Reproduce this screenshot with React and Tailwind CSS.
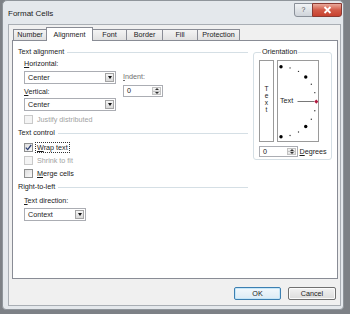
import React from 'react';

const font = { fontFamily: '"Liberation Sans", Arial, sans-serif' };

const Header = ({ children }) => (
  <div className="h-[12px] flex items-center">
    <span className="leading-none">{children}</span>
    <div className="flex-1 h-px bg-[#d5dfe5] ml-[3px]" />
  </div>
);

const Arrow = ({ up }) =>
  up ? (
    <span className="w-0 h-0 border-l-[2px] border-r-[2px] border-b-[2px] border-l-transparent border-r-transparent border-b-[#333]" />
  ) : (
    <span className="w-0 h-0 border-l-[2px] border-r-[2px] border-t-[2px] border-l-transparent border-r-transparent border-t-[#333]" />
  );

const Select = ({ value, width }) => (
  <div className={`${width} h-[13px] border border-[#abadb3] bg-white flex items-center`}>
    <span className="pl-[3px] flex-1 leading-none">{value}</span>
    <span className="w-[9px] h-[9px] mr-px border border-[#a4a4a4] bg-linear-to-b from-[#f6f6f6] to-[#d8d8d8] flex items-center justify-center">
      <span className="w-0 h-0 border-l-[2.5px] border-r-[2.5px] border-t-[3px] border-l-transparent border-r-transparent border-t-[#111]" />
    </span>
  </div>
);

const Spin = ({ width, height }) => (
  <div className={`${width} ${height} border border-[#abadb3] bg-white flex`}>
    <span className="flex-1 pl-[3px] flex items-center leading-none">0</span>
    <div className="w-[9px] my-px mr-px flex flex-col border border-[#c2c2c2]">
      <div className="flex-1 flex items-center justify-center bg-linear-to-b from-[#f7f7f7] to-[#e4e4e4] border-b border-[#c2c2c2]">
        <Arrow up />
      </div>
      <div className="flex-1 flex items-center justify-center bg-linear-to-b from-[#f2f2f2] to-[#dedede]">
        <Arrow />
      </div>
    </div>
  </div>
);

const Check = ({ checked, disabled, focus, children }) => (
  <div className="h-[12px] flex items-center">
    <span
      className={`w-[9px] h-[9px] border flex items-center justify-center ${
        disabled
          ? 'border-[#c9c9c9] bg-[#f4f4f4]'
          : 'border-[#8e8f8f] bg-linear-to-br from-[#dcdcdc] to-[#fbfbfb]'
      }`}
    >
      {checked && (
        <svg width="7" height="7" viewBox="0 0 7 7">
          <path d="M0.8 3.6 L2.7 5.6 L6.2 1" fill="none" stroke="#2c3f73" strokeWidth="1.3" />
        </svg>
      )}
    </span>
    <span
      className={`ml-[2px] px-px leading-[9px] ${disabled ? 'text-[#a2a2a2]' : ''} ${
        focus ? 'border border-dotted border-[#333]' : 'border border-transparent'
      }`}
    >
      {children}
    </span>
  </div>
);

const U = ({ children }) => <span className="underline underline-offset-1">{children}</span>;

const tabs = [
  ['Number', 'w-[34px]'],
  ['Alignment', 'w-[47px]'],
  ['Font', 'w-[35px]'],
  ['Border', 'w-[37px]'],
  ['Fill', 'w-[36px]'],
  ['Protection', 'w-[43px]'],
];

const Dial = () => {
  const cx = 3;
  const cy = 40.7;
  const r = 35;
  const dots = [];
  for (let a = 90; a >= -90; a -= 15) {
    if (a === 0) continue;
    const t = (a * Math.PI) / 180;
    const x = cx + r * Math.cos(t);
    const y = cy - r * Math.sin(t);
    const big = a % 45 === 0;
    dots.push(<circle key={a} cx={x} cy={y} r={big ? 1.7 : 0.7} fill={big ? '#000' : '#333'} />);
  }
  return (
    <svg className="absolute inset-0" width="40" height="80" viewBox="0 0 40 80">
      {dots}
      <line x1="19.5" y1="40.5" x2="36" y2="40.5" stroke="#555" strokeWidth="0.8" />
      <polygon points="38.3,38.4 40.4,40.6 38.3,42.8 36.2,40.6" fill="#b0193e" />
    </svg>
  );
};

export default function App() {
  return (
    <div
      className="w-[350px] h-[314px] bg-[#7d8186] pl-[2px] pr-[6px] pb-[4px] flex text-[7.2px] text-[#1b1b1b]"
      style={font}
    >
      <div className="flex-1 flex flex-col bg-[#e4e8ec] border border-[#8f959b] rounded-b-[4px] rounded-t-[5px]">
        {/* title bar */}
        <div className="h-[23px] flex items-start">
          <span className="pl-[5px] pt-[9px] text-[8px] leading-none">Format Cells</span>
          <div className="ml-auto mt-[2px] mr-px flex">
            <div className="w-[19px] h-[14px] border border-[#8a9099] rounded-bl-[3px] bg-linear-to-b from-[#f1f3f5] to-[#cfd4da] flex items-center justify-center text-[7px] text-[#555]">
              ?
            </div>
            <div className="w-[30px] h-[14px] -ml-px border border-[#8a3a33] rounded-br-[3px] bg-linear-to-b from-[#e9a99b] via-[#d25a48] to-[#c7412f] flex items-center justify-center">
              <svg width="9" height="8" viewBox="0 0 9 8">
                <path d="M1.5 1 L7.5 7 M7.5 1 L1.5 7" stroke="#fff" strokeWidth="1.8" />
              </svg>
            </div>
          </div>
        </div>

        {/* client */}
        <div className="ml-[5px] mr-[2px] mb-[3px] flex-1 flex flex-col border border-[#a9aeb4] bg-[#f0f0f0]">
          <div className="h-[15px] pl-[4px] flex items-end">
            {tabs.map(([name, w], i) =>
              name === 'Alignment' ? (
                <div
                  key={name}
                  className={`${w} h-[14px] -mb-px -ml-px relative z-10 bg-white border border-b-0 border-[#898c95] flex items-center justify-center leading-none`}
                >
                  {name}
                </div>
              ) : (
                <div
                  key={name}
                  className={`${w} h-[11px] ${i === 0 ? '' : '-ml-px'} bg-linear-to-b from-[#f4f4f4] to-[#e1e1e1] border border-b-0 border-[#898c95] flex items-center justify-center leading-none`}
                >
                  {name}
                </div>
              )
            )}
          </div>

          {/* tab panel */}
          <div className="ml-[3px] mr-[2px] h-[239px] bg-white border border-[#898c95] pl-[5px] pt-[5px] flex">
            {/* left column */}
            <div className="w-[230px] flex flex-col">
              <Header>Text alignment</Header>
              <div className="pl-[6px] flex flex-col">
                <div className="flex">
                  <div className="w-[92px] flex flex-col">
                    <div className="h-[12px] flex items-center leading-none">
                      <span>
                        <U>H</U>orizontal:
                      </span>
                    </div>
                    <div className="mt-px">
                      <Select value="Center" width="w-[92px]" />
                    </div>
                    <div className="mt-[2px] h-[12px] flex items-center leading-none">
                      <span>
                        <U>V</U>ertical:
                      </span>
                    </div>
                    <Select value="Center" width="w-[92px]" />
                  </div>
                  <div className="ml-[7px] flex flex-col">
                    <div className="mt-[13px] h-[12px] flex items-center leading-none text-[#6f6f6f]">
                      <span>
                        <U>I</U>ndent:
                      </span>
                    </div>
                    <div className="mt-[2px]">
                      <Spin width="w-[40px]" height="h-[12px]" />
                    </div>
                  </div>
                </div>
                <div className="mt-[2px]">
                  <Check disabled>Justify distributed</Check>
                </div>
              </div>

              <div className="mt-[2px]">
                <Header>Text control</Header>
              </div>
              <div className="pl-[6px] flex flex-col">
                <div className="mt-[2px]">
                  <Check checked focus>
                    <U>W</U>rap text
                  </Check>
                </div>
                <div className="mt-px">
                  <Check disabled>Shrink to fit</Check>
                </div>
                <div className="mt-px">
                  <Check>
                    <U>M</U>erge cells
                  </Check>
                </div>
              </div>

              <div className="mt-[2px]">
                <Header>Right-to-left</Header>
              </div>
              <div className="pl-[6px] flex flex-col">
                <div className="mt-[2px] h-[12px] flex items-center leading-none">
                  <span>
                    <U>T</U>ext direction:
                  </span>
                </div>
                <div className="mt-px">
                  <Select value="Context" width="w-[62px]" />
                </div>
              </div>
            </div>

            {/* orientation */}
            <fieldset className="ml-[5px] w-[77px] h-[114px] border border-[#d5dfe5] rounded-[3px] pl-[5px] pr-[4px]">
              <legend className="ml-[2px] px-px h-[12px] leading-[12px]">Orientation</legend>
              <div className="mt-[2px] flex">
                <div className="w-[15px] h-[82px] border border-[#9a9a9a] flex flex-col items-center justify-center pb-[4px] text-[6.6px]">
                  <span className="h-[7px] leading-[7px]">T</span>
                  <span className="h-[7px] leading-[7px]">e</span>
                  <span className="h-[7px] leading-[7px]">x</span>
                  <span className="h-[7px] leading-[7px]">t</span>
                </div>
                <div className="ml-[3px] w-[42px] h-[82px] border border-[#9a9a9a] relative flex items-center pl-[2px]">
                  <Dial />
                  <span className="relative leading-none">Text</span>
                </div>
              </div>
              <div className="mt-[4px] flex items-center">
                <Spin width="w-[39px]" height="h-[11px]" />
                <span className="ml-[1.5px] leading-none">
                  <U>D</U>egrees
                </span>
              </div>
            </fieldset>
          </div>

          {/* buttons */}
          <div className="mt-[8px] mr-[4px] flex justify-end gap-[7px]">
            <div className="w-[47px] h-[13px] rounded-[2px] border border-[#3c7fb1] bg-linear-to-b from-[#f2f8fc] to-[#dcebf5] shadow-[inset_0_0_0_1px_#c5e6f8] flex items-center justify-center leading-none">
              OK
            </div>
            <div className="w-[48px] h-[13px] rounded-[2px] border border-[#707070] bg-linear-to-b from-[#f2f2f2] to-[#dcdcdc] shadow-[inset_0_0_0_1px_#fbfbfb] flex items-center justify-center leading-none">
              Cancel
            </div>
          </div>
        </div>
      </div>
    </div>
  );
}
